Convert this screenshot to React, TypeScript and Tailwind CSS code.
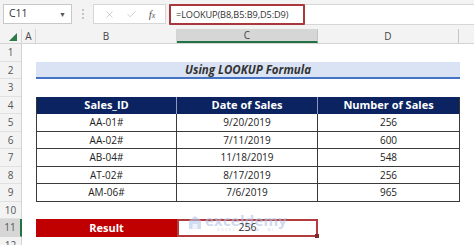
import { X, Check } from 'lucide-react'

const rowHeights = ['h-[18px]', 'h-[17px]', 'h-[18px]', 'h-[17px]', 'h-[18px]', 'h-[17px]', 'h-[18px]', 'h-[17px]', 'h-[18px]', 'h-[17px]', 'h-[18px]', 'h-[18px]']

const sales = [
  { id: 'AA-01#', date: '9/20/2019', n: 256, h: 'h-[18px]' },
  { id: 'AA-02#', date: '7/11/2019', n: 600, h: 'h-[17px]' },
  { id: 'AB-04#', date: '11/18/2019', n: 548, h: 'h-[18px]' },
  { id: 'AT-02#', date: '8/17/2019', n: 256, h: 'h-[17px]' },
  { id: 'AM-06#', date: '7/6/2019', n: 965, h: 'h-[18px]' },
]

export default function App() {
  return (
    <div className="w-[474px] h-[245px] overflow-hidden bg-white font-['Open_Sans',sans-serif] text-[#262626]">
      {/* Formula bar */}
      <div className="h-[29px] bg-[#f3f3f3] flex items-start pt-[4px] pl-[3px]">
        <div className="w-[69px] h-[20px] bg-white border border-[#c8c8c8] flex items-center justify-between pl-[5px] pr-[5px]">
          <span className="text-[10.5px] text-[#333]">C11</span>
          <span className="text-[7px] text-[#555] leading-none">▼</span>
        </div>
        <div className="w-[21px] h-[20px] flex flex-col items-center justify-center gap-[2px]">
          <span className="w-[2px] h-[2px] rounded-full bg-[#b5b5b5]" />
          <span className="w-[2px] h-[2px] rounded-full bg-[#b5b5b5]" />
          <span className="w-[2px] h-[2px] rounded-full bg-[#b5b5b5]" />
        </div>
        <div className="w-[73px] h-[20px] bg-white border border-[#d6d6d6] flex items-center justify-around px-[4px]">
          <X className="w-[11px] h-[11px] text-[#b8b8b8]" strokeWidth={1.5} />
          <Check className="w-[11px] h-[11px] text-[#b8b8b8]" strokeWidth={1.5} />
          <span className="font-['Liberation_Serif',serif] italic text-[11px] text-[#555] leading-none">
            f<span className="text-[8px]">x</span>
          </span>
        </div>
        <div className="flex-1 h-[21px] ml-[3px] bg-white border-y border-[#d6d6d6] flex">
          <div className="w-[136px] h-[21px] -mt-px border-2 border-[#a8383b] rounded-[1px] flex items-center pl-[5px]">
            <span className="text-[9.2px] text-[#333] tracking-[-0.1px]">=LOOKUP(B8,B5:B9,D5:D9)</span>
          </div>
        </div>
      </div>

      {/* Column headers */}
      <div className="flex h-[15px] bg-[#f3f3f3] border-b border-[#d4d4d4] text-[10px] text-[#444]">
        <div className="w-[22px] border-r border-[#d4d4d4]">
          <svg width="22" height="14" viewBox="0 0 22 14">
            <polygon points="17,4 17,12 9,12" fill="#2f7a4b" />
          </svg>
        </div>
        <div className="w-[14px] border-r border-[#d4d4d4] flex items-center justify-center">A</div>
        <div className="w-[141px] border-r border-[#d4d4d4] flex items-center justify-center">B</div>
        <div className="w-[141px] bg-[#d6d6d6] border-b-2 border-[#217346] border-r border-r-[#c4c4c4] flex items-center justify-center">C</div>
        <div className="w-[141px] border-r border-[#c4c4c4] flex items-center justify-center">D</div>
        <div className="flex-1" />
      </div>

      <div className="flex">
        {/* Row numbers */}
        <div className="w-[22px] bg-[#f3f3f3] border-r border-[#d4d4d4] flex flex-col text-[10px] text-[#555]">
          {rowHeights.map((h, i) =>
            i === 10 ? (
              <div key={i} className={`${h} bg-[#d6d6d6] border-b border-[#d4d4d4] border-r-2 border-r-[#217346] -mr-px flex items-center justify-center`}>
                {i + 1}
              </div>
            ) : (
              <div key={i} className={`${h} border-b border-[#e1e1e1] flex items-center justify-center`}>
                {i + 1}
              </div>
            ),
          )}
        </div>

        {/* Sheet */}
        <div className="flex-1 pl-[14px]">
          <div className="h-[18px]" />
          <div className="w-[424px] h-[17px] bg-[#dae3f3] border-b-2 border-[#4472c4] flex items-center justify-center">
            <span className="text-[11.5px] font-bold italic text-[#333]">Using LOOKUP Formula</span>
          </div>
          <div className="h-[18px]" />

          {/* Table */}
          <div className="w-[424px]">
            <div className="grid grid-cols-[141px_141px_142px] h-[17px] bg-[#0b2461] text-white text-[11px] font-bold">
              <div className="border-l border-[#333] border-r border-r-[#8e9abb] flex items-center justify-center">Sales_ID</div>
              <div className="border-r border-[#8e9abb] flex items-center justify-center">Date of Sales</div>
              <div className="border-r border-[#333] flex items-center justify-center">Number of Sales</div>
            </div>
            {sales.map((s) => (
              <div key={s.id} className={`grid grid-cols-[141px_141px_142px] ${s.h} text-[10px] text-[#222]`}>
                <div className="border-l border-r border-b border-[#3a3a3a] flex items-center justify-center">{s.id}</div>
                <div className="border-r border-b border-[#3a3a3a] flex items-center justify-center">{s.date}</div>
                <div className="border-r border-b border-[#3a3a3a] flex items-center justify-center">{s.n}</div>
              </div>
            ))}
          </div>

          <div className="h-[17px]" />

          {/* Result row */}
          <div className="flex h-[18px]">
            <div className="w-[141px] bg-[#c00000] flex items-center justify-center text-white text-[11px] font-bold">
              Result
            </div>
            <div className="relative w-[141px] border-2 border-[#b13b3d] flex items-center justify-center">
              <div className="absolute left-[9px] -top-[6px] flex items-start gap-[3px] opacity-60 pointer-events-none">
                <svg width="14" height="15" viewBox="0 0 14 15">
                  <path d="M7 1 L13 5.5 L13 14 L1 14 L1 5.5 Z" fill="#b7c7e8" />
                  <path d="M4.5 9 L9.5 9 L9.5 14 L4.5 14 Z" fill="#e3eaf7" />
                </svg>
                <div className="flex flex-col items-center -mt-[4px]">
                  <span className="text-[15px] font-bold text-[#b0c2e8] leading-[18px] tracking-[0.2px]">exceldemy</span>
                  <span className="text-[4px] text-[#a7b6d4] tracking-[1.5px] leading-none -mt-[1px]">EXCEL · DATA · BI</span>
                </div>
              </div>
              <span className="relative text-[10.5px] text-[#333]">256</span>
              <span className="absolute -right-[3px] -bottom-[3px] w-[4px] h-[4px] bg-[#7a2a2a]" />
            </div>
          </div>
        </div>
      </div>
    </div>
  )
}
